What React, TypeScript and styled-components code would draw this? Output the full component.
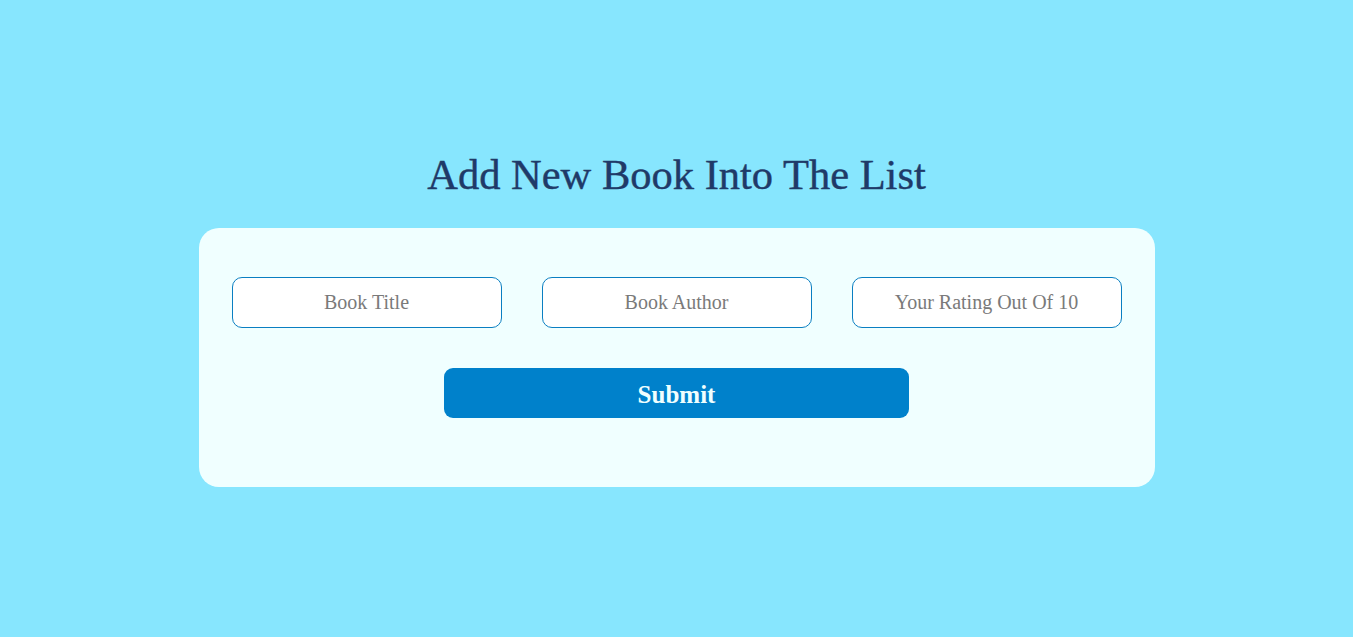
import React from "react";
import styled, { createGlobalStyle } from "styled-components";

const Global = createGlobalStyle`
  html, body { margin: 0; padding: 0; }
  body {
    background: #87e6fe;
    font-family: "Liberation Serif", "DejaVu Serif", serif;
  }
  * { box-sizing: border-box; }
`;

const Page = styled.main`
  min-height: 100vh;
  display: flex;
  flex-direction: column;
  align-items: center;
  justify-content: center;
`;

const Title = styled.h1`
  margin: 0 0 28px;
  font-size: 42.5px;
  font-weight: 400;
  line-height: 50px;
  color: #1f3a68;
  text-align: center;
  -webkit-text-stroke: 0.4px #1f3a68;
`;

const Card = styled.form`
  width: 956px;
  background: #f0ffff;
  border-radius: 20px;
  padding: 49px 33px 69px;
  display: flex;
  flex-direction: column;
  align-items: center;
  gap: 40px;
`;

const Row = styled.div`
  width: 100%;
  display: grid;
  grid-template-columns: repeat(3, 1fr);
  gap: 40px;
`;

const Field = styled.input`
  height: 51px;
  width: 100%;
  border: 1px solid #0a7fc2;
  border-radius: 10px;
  background: #ffffff;
  font-family: inherit;
  font-size: 20px;
  text-align: center;
  color: #333;
  outline: none;
  &::placeholder { color: #7a7a7a; }
`;

const Submit = styled.button`
  width: 465px;
  height: 50px;
  padding: 4px 0 0;
  border: none;
  border-radius: 9px;
  background: #0081cb;
  color: #f0ffff;
  font-family: inherit;
  font-size: 25px;
  font-weight: 700;
  cursor: pointer;
`;

export default function App() {
  return (
    <>
      <Global />
      <Page>
        <Title>Add New Book Into The List</Title>
        <Card onSubmit={(e) => e.preventDefault()}>
          <Row>
            <Field placeholder="Book Title" />
            <Field placeholder="Book Author" />
            <Field placeholder="Your Rating Out Of 10" />
          </Row>
          <Submit type="submit">Submit</Submit>
        </Card>
      </Page>
    </>
  );
}
